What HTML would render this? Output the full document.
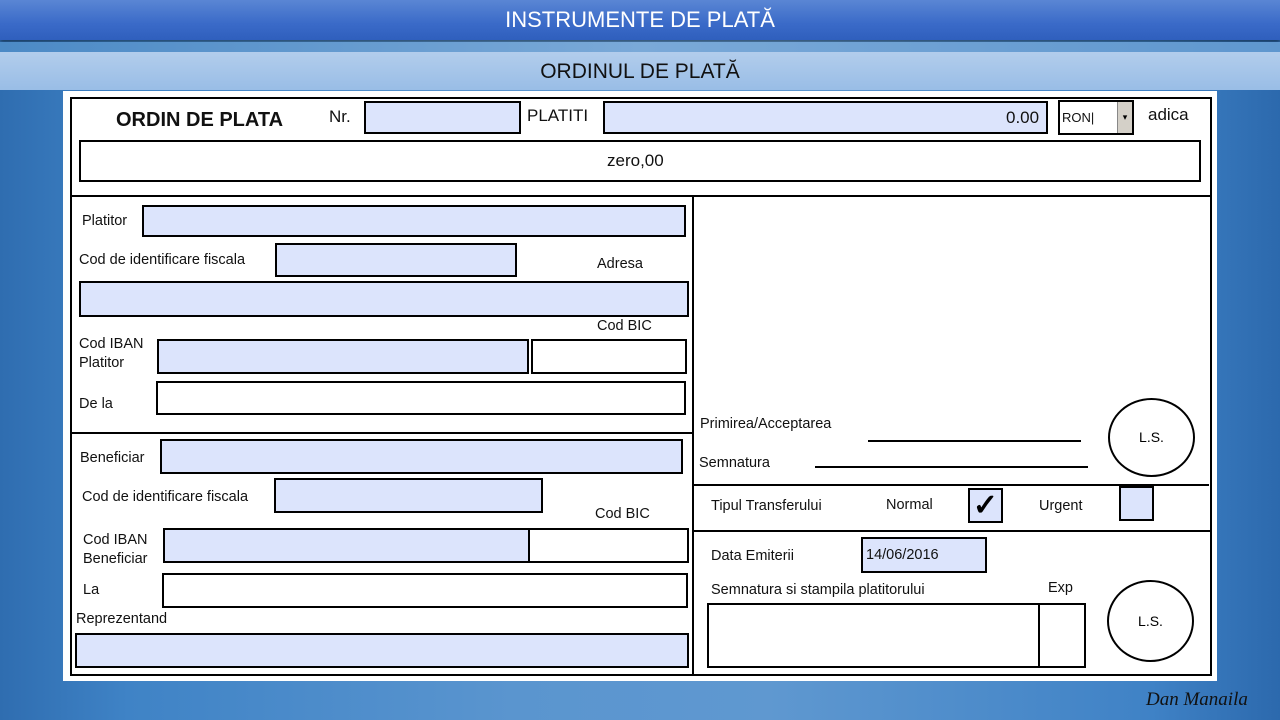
<!DOCTYPE html>
<html><head><meta charset="utf-8"><style>
*{margin:0;padding:0;box-sizing:border-box}
body{width:1280px;height:720px;overflow:hidden;position:relative;font-family:"Liberation Sans",sans-serif;
background:linear-gradient(90deg,#2f6db0 0%,#3f83c6 10%,#5a95cf 40%,#5f98d0 60%,#3f82c6 90%,#2c69ad 100%)}
.a{position:absolute}
.top{left:0;top:0;width:1280px;height:40px;background:linear-gradient(#5a86d4,#3a6ac8 60%,#2f5fbd);color:#fff;font-size:22px;text-align:center;line-height:40px;box-shadow:0 2px 4px rgba(0,0,0,.5)}
.strip{left:0;top:42px;width:1280px;height:10px;background:linear-gradient(90deg,#4c8ac6,#7aa9d8,#5f97cf)}
.sub{left:0;top:52px;width:1280px;height:38px;background:linear-gradient(#b2cdec,#99bde6);color:#111;font-size:21px;text-align:center;line-height:40px}
.panel{left:63px;top:91px;width:1154px;height:590px;background:#fff}
.f{position:absolute;border:2px solid #000;background:#dce4fc}
.w{background:#fff}
.t{position:absolute;font-size:14.5px;color:#111;white-space:nowrap;line-height:1.2}
.hl{position:absolute;height:2px;background:#000}
.vl{position:absolute;width:2px;background:#000}
.c{position:absolute;border:2px solid #000;border-radius:50%;background:#fff;text-align:center;font-size:14px}
</style></head><body>
<div class="a top">INSTRUMENTE DE PLATĂ</div>
<div class="a strip"></div>
<div class="a sub">ORDINUL DE PLATĂ</div>
<div class="a panel"></div>
<div class="a" style="left:70px;top:97px;width:1142px;height:579px;border:2px solid #000"></div>
<div class="hl" style="left:70px;top:195px;width:1142px"></div>
<div class="vl" style="left:692px;top:196px;height:480px"></div>
<div class="hl" style="left:70px;top:432px;width:623px"></div>
<div class="hl" style="left:693px;top:484px;width:516px"></div>
<div class="hl" style="left:693px;top:530px;width:518px"></div>

<div class="t" style="left:116px;top:108px;font-size:20px;font-weight:bold">ORDIN DE PLATA</div>
<div class="t" style="left:329px;top:107px;font-size:17px">Nr.</div>
<div class="f" style="left:364px;top:101px;width:157px;height:33px"></div>
<div class="t" style="left:527px;top:106px;font-size:17px">PLATITI</div>
<div class="f" style="left:603px;top:101px;width:445px;height:33px"></div>
<div class="t" style="left:1006px;top:108px;font-size:17px">0.00</div>
<div class="f w" style="left:1058px;top:100px;width:76px;height:35px"></div>
<div class="t" style="left:1062px;top:110px;font-size:13px">RON|</div>
<div class="a" style="left:1117px;top:102px;width:15px;height:31px;background:#d4d0c8;border-left:1px solid #888;font-size:9px;text-align:center;line-height:31px">▾</div>
<div class="t" style="left:1148px;top:105px;font-size:17px">adica</div>
<div class="f w" style="left:79px;top:140px;width:1122px;height:42px"></div>
<div class="t" style="left:607px;top:151px;font-size:17px">zero,00</div>

<div class="t" style="left:82px;top:213px">Platitor</div>
<div class="f" style="left:142px;top:205px;width:544px;height:32px"></div>
<div class="t" style="left:79px;top:252px">Cod de identificare fiscala</div>
<div class="f" style="left:275px;top:243px;width:242px;height:34px"></div>
<div class="t" style="left:597px;top:256px">Adresa</div>
<div class="f" style="left:79px;top:281px;width:610px;height:36px"></div>
<div class="t" style="left:597px;top:318px">Cod BIC</div>
<div class="t" style="left:79px;top:336px">Cod IBAN</div>
<div class="t" style="left:79px;top:355px">Platitor</div>
<div class="f" style="left:157px;top:339px;width:372px;height:35px"></div>
<div class="f w" style="left:531px;top:339px;width:156px;height:35px"></div>
<div class="t" style="left:79px;top:396px">De la</div>
<div class="f w" style="left:156px;top:381px;width:530px;height:34px"></div>

<div class="t" style="left:80px;top:450px">Beneficiar</div>
<div class="f" style="left:160px;top:439px;width:523px;height:35px"></div>
<div class="t" style="left:82px;top:489px">Cod de identificare fiscala</div>
<div class="f" style="left:274px;top:478px;width:269px;height:35px"></div>
<div class="t" style="left:595px;top:506px">Cod BIC</div>
<div class="t" style="left:83px;top:532px">Cod IBAN</div>
<div class="t" style="left:83px;top:551px">Beneficiar</div>
<div class="f" style="left:163px;top:528px;width:367px;height:35px"></div>
<div class="f w" style="left:528px;top:528px;width:161px;height:35px"></div>
<div class="t" style="left:83px;top:582px">La</div>
<div class="f w" style="left:162px;top:573px;width:526px;height:35px"></div>
<div class="t" style="left:76px;top:611px">Reprezentand</div>
<div class="f" style="left:75px;top:633px;width:614px;height:35px"></div>

<div class="t" style="left:700px;top:416px">Primirea/Acceptarea</div>
<div class="hl" style="left:868px;top:440px;width:213px"></div>
<div class="t" style="left:699px;top:455px">Semnatura</div>
<div class="hl" style="left:815px;top:466px;width:273px"></div>
<div class="c" style="left:1108px;top:398px;width:87px;height:79px;line-height:75px">L.S.</div>

<div class="t" style="left:711px;top:498px">Tipul Transferului</div>
<div class="t" style="left:886px;top:497px">Normal</div>
<div class="f" style="left:968px;top:488px;width:35px;height:35px;font-size:30px;font-weight:bold;text-align:center;line-height:32px">✓</div>
<div class="t" style="left:1039px;top:498px">Urgent</div>
<div class="f" style="left:1119px;top:486px;width:35px;height:35px"></div>

<div class="t" style="left:711px;top:548px">Data Emiterii</div>
<div class="f" style="left:861px;top:537px;width:126px;height:36px"></div>
<div class="t" style="left:866px;top:547px">14/06/2016</div>
<div class="t" style="left:711px;top:582px">Semnatura si stampila platitorului</div>
<div class="t" style="left:1048px;top:580px">Exp</div>
<div class="f w" style="left:707px;top:603px;width:334px;height:65px"></div>
<div class="f w" style="left:1038px;top:603px;width:48px;height:65px"></div>
<div class="c" style="left:1107px;top:580px;width:87px;height:82px;line-height:78px">L.S.</div>

<div class="t" style="left:1146px;top:689px;font-family:'Liberation Serif',serif;font-style:italic;font-size:19px;color:#111">Dan Manaila</div>
</body></html>
